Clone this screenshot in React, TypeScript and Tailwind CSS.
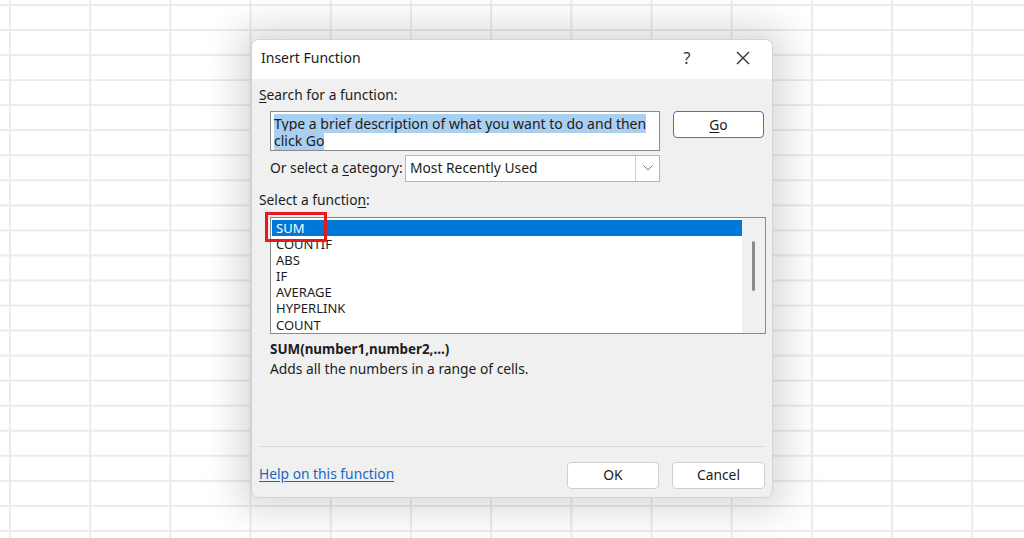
import React from "react";

const items = ["SUM", "COUNTIF", "ABS", "IF", "AVERAGE", "HYPERLINK", "COUNT"];

export default function App() {
  return (
    <div
      className="w-[1024px] h-[538px] overflow-hidden flex items-center justify-center pb-[2px] bg-white bg-[linear-gradient(to_right,#ebebeb_2px,transparent_2px),linear-gradient(to_bottom,#ebebeb_2px,transparent_2px)] bg-[size:80.2px_25.05px] bg-[position:9px_4px]"
      style={{ fontFamily: '"Noto Sans", "Open Sans", sans-serif' }}
    >
      <div className="w-[522px] h-[459px] rounded-[8px] overflow-hidden bg-[#f0f0f0] border border-[#d4d4d4] shadow-[0_0_36px_14px_rgba(0,0,0,0.14)] flex flex-col text-[13.8px] leading-[16px] text-[#1c1c1c]">
        {/* title bar */}
        <div className="h-[39px] shrink-0 bg-white flex items-center pl-[9px] pb-[2px]">
          <span className="text-[14px] text-[#1a1a1a]">Insert Function</span>
          <span className="ml-auto w-[56px] text-center text-[16px] text-[#333]">?</span>
          <span className="w-[56px] flex justify-center mr-[1px]">
            <svg width="14" height="14" viewBox="0 0 14 14" fill="none" stroke="#333" strokeWidth="1.4">
              <path d="M1 1 L13 13 M13 1 L1 13" />
            </svg>
          </span>
        </div>

        {/* body */}
        <div className="flex-1 flex flex-col pl-[7px] pr-[7px]">
          <div className="mt-[8px] h-[16px]">
            <span className="underline underline-offset-2">S</span>earch for a function:
          </div>

          <div className="mt-[8px] flex pl-[11px]">
            <div className="w-[390px] h-[40px] bg-white border border-[#8a8a8a] px-[3px] pt-[3px] text-[14px] leading-[17px]">
              <span className="bg-[#a9cff1] [box-decoration-break:clone]">
                Type a brief description of what you want to do and then click Go
              </span>
            </div>
            <button className="ml-[13px] w-[91px] h-[27px] bg-white rounded-[4px] border-[1.5px] border-[#2d7bd0] flex items-center justify-center pt-[1px] text-[13.8px] text-[#1c1c1c]">
              <span className="underline underline-offset-2">G</span>o
            </button>
          </div>

          <div className="mt-[4px] flex items-center pl-[11px] h-[27px]">
            <span className="w-[135px]">
              Or select a <span className="underline underline-offset-2">c</span>ategory:
            </span>
            <div className="w-[255px] h-[27px] bg-white border border-[#b5b5b5] flex items-center">
              <span className="pl-[4px] flex-1">Most Recently Used</span>
              <span className="w-[24px] h-full border-l border-[#cfcfcf] flex items-center justify-center">
                <svg width="10" height="6" viewBox="0 0 10 6" fill="none" stroke="#777" strokeWidth="1">
                  <path d="M0.5 0.5 L5 5 L9.5 0.5" />
                </svg>
              </span>
            </div>
          </div>

          <div className="mt-[10px] h-[16px]">
            Select a functio<span className="underline underline-offset-2">n</span>:
          </div>

          <div className="relative mt-[9px] ml-[11px] w-[496px] h-[117px] bg-white border border-[#8a8a8a] flex text-[13px]">
            <div className="flex-1 pt-[2px] pl-[1px]">
              {items.map((it, i) => (
                <div
                  key={it}
                  className={
                    i === 0
                      ? "h-[16.2px] pl-[4px] pt-[1px] bg-[#0078d7] text-white leading-[15px]"
                      : "h-[16.2px] pl-[4px] pt-[1px] leading-[15px]"
                  }
                >
                  {it}
                </div>
              ))}
            </div>
            <div className="w-[23px] bg-[#f0f0f0] flex justify-center pt-[23px]">
              <div className="w-[3px] h-[50px] bg-[#8a8a8a] rounded-full" />
            </div>
            <div className="absolute left-[-6px] top-[-6px] w-[62px] h-[30px] border-[3px] border-[#e3191b]" />
          </div>

          <div className="mt-[7px] ml-[11px] h-[16px] font-bold text-[13.4px]">SUM(number1,number2,...)</div>
          <div className="mt-[4px] ml-[11px] h-[16px]">Adds all the numbers in a range of cells.</div>

          <div className="mt-[69px] h-px bg-[#dadada]" />

          <div className="mt-[15px] flex items-center">
            <span className="mb-[3px] text-[#1a66c2] underline underline-offset-2">Help on this function</span>
            <button className="ml-auto w-[92px] h-[27px] bg-white rounded-[4px] border border-[#cfcfcf] text-[13.8px] text-[#1c1c1c]">
              OK
            </button>
            <button className="ml-[13px] w-[93px] h-[27px] bg-white rounded-[4px] border border-[#cfcfcf] text-[13.8px] text-[#1c1c1c]">
              Cancel
            </button>
          </div>
        </div>
      </div>
    </div>
  );
}
